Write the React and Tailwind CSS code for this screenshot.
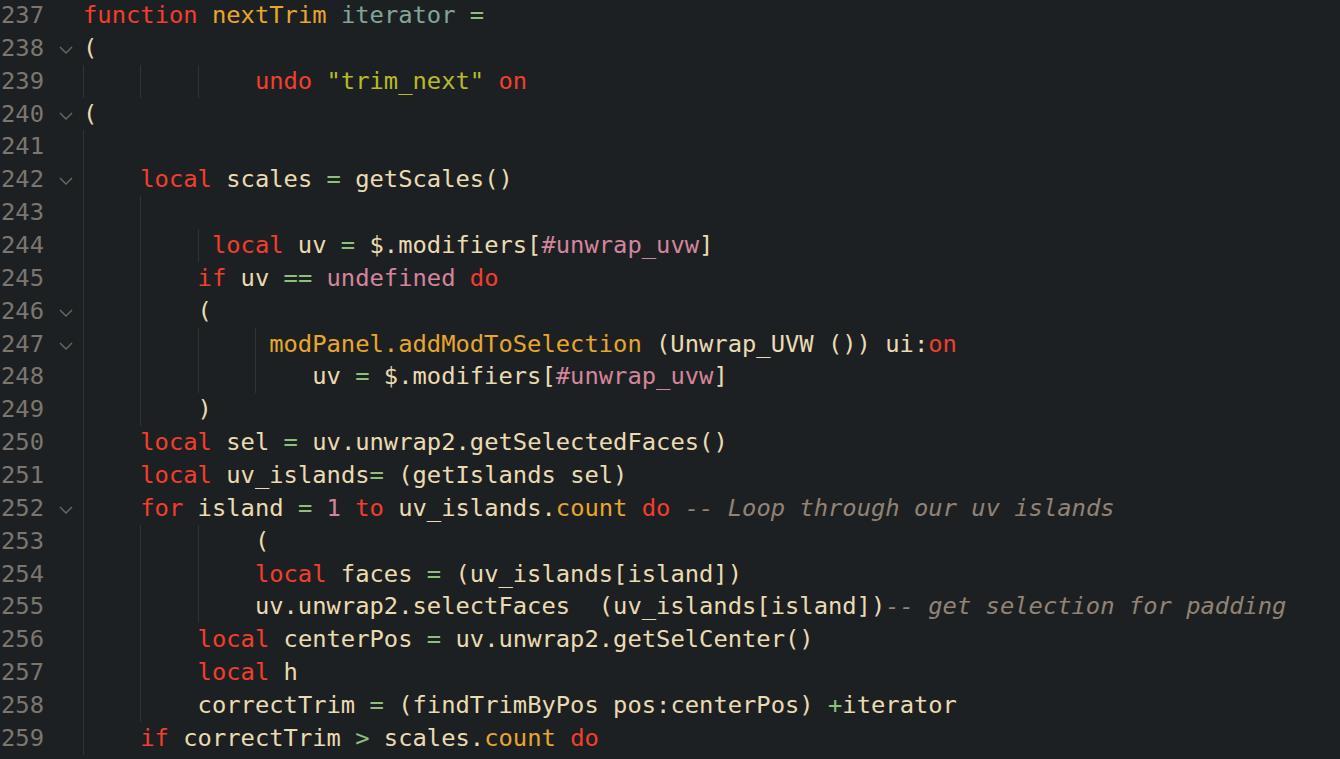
import React from 'react';

const colors = {
  k: 'text-[#f43e2d]',
  f: 'text-[#e8a72c]',
  t: 'text-[#ebdbb2]',
  o: 'text-[#8ec07c]',
  p: 'text-[#d3869b]',
  s: 'text-[#b8bb26]',
  b: 'text-[#83a598]',
  c: 'text-[#928374] italic',
};

// guides = columns where indent guides sit, col = column where the code starts
const lines = [
  { n: 237, guides: [], col: 0, code: [['k', 'function'], ['t', ' '], ['f', 'nextTrim'], ['t', ' '], ['b', 'iterator'], ['t', ' '], ['o', '=']] },
  { n: 238, fold: true, guides: [], col: 0, code: [['t', '(']] },
  { n: 239, guides: [0, 4, 8], col: 12, code: [['k', 'undo'], ['t', ' '], ['s', '"trim_next"'], ['t', ' '], ['k', 'on']] },
  { n: 240, fold: true, guides: [], col: 0, code: [['t', '(']] },
  { n: 241, guides: [0], col: 4, code: [] },
  { n: 242, fold: true, guides: [0], col: 4, code: [['k', 'local'], ['t', ' scales '], ['o', '='], ['t', ' getScales()']] },
  { n: 243, guides: [0, 4], col: 8, code: [] },
  { n: 244, guides: [0, 4, 8], col: 9, code: [['k', 'local'], ['t', ' uv '], ['o', '='], ['t', ' $.modifiers['], ['p', '#unwrap_uvw'], ['t', ']']] },
  { n: 245, guides: [0, 4], col: 8, code: [['k', 'if'], ['t', ' uv '], ['o', '=='], ['t', ' '], ['p', 'undefined'], ['t', ' '], ['k', 'do']] },
  { n: 246, fold: true, guides: [0, 4], col: 8, code: [['t', '(']] },
  { n: 247, fold: true, guides: [0, 4, 8, 12], col: 13, code: [['f', 'modPanel.addModToSelection'], ['t', ' (Unwrap_UVW ()) ui:'], ['k', 'on']] },
  { n: 248, guides: [0, 4, 8, 12], col: 16, code: [['t', 'uv '], ['o', '='], ['t', ' $.modifiers['], ['p', '#unwrap_uvw'], ['t', ']']] },
  { n: 249, guides: [0, 4], col: 8, code: [['t', ')']] },
  { n: 250, guides: [0], col: 4, code: [['k', 'local'], ['t', ' sel '], ['o', '='], ['t', ' uv.unwrap2.getSelectedFaces()']] },
  { n: 251, guides: [0], col: 4, code: [['k', 'local'], ['t', ' uv_islands'], ['o', '='], ['t', ' (getIslands sel)']] },
  { n: 252, fold: true, guides: [0], col: 4, code: [['k', 'for'], ['t', ' island '], ['o', '='], ['t', ' '], ['p', '1'], ['t', ' '], ['k', 'to'], ['t', ' uv_islands.'], ['f', 'count'], ['t', ' '], ['k', 'do'], ['t', ' '], ['c', '-- Loop through our uv islands']] },
  { n: 253, guides: [0, 4, 8], col: 12, code: [['t', '(']] },
  { n: 254, guides: [0, 4, 8], col: 12, code: [['k', 'local'], ['t', ' faces '], ['o', '='], ['t', ' (uv_islands[island])']] },
  { n: 255, guides: [0, 4, 8], col: 12, code: [['t', 'uv.unwrap2.selectFaces  (uv_islands[island])'], ['c', '-- get selection for padding']] },
  { n: 256, guides: [0, 4], col: 8, code: [['k', 'local'], ['t', ' centerPos '], ['o', '='], ['t', ' uv.unwrap2.getSelCenter()']] },
  { n: 257, guides: [0, 4], col: 8, code: [['k', 'local'], ['t', ' h']] },
  { n: 258, guides: [0, 4], col: 8, code: [['t', 'correctTrim '], ['o', '='], ['t', ' (findTrimByPos pos:centerPos) '], ['o', '+'], ['t', 'iterator']] },
  { n: 259, guides: [0], col: 4, code: [['k', 'if'], ['t', ' correctTrim '], ['o', '>'], ['t', ' scales.'], ['f', 'count'], ['t', ' '], ['k', 'do']] },
];

const Chevron = () => (
  <svg width="14" height="8" viewBox="0 0 14 8" className="mt-[3px]">
    <path d="M1 1 L7 7 L13 1" fill="none" stroke="#6d6862" strokeWidth="1.4" />
  </svg>
);

const App = () => {
  return (
    <div className="w-[1340px] h-[759px] overflow-hidden bg-[#1d2023] font-['DejaVu_Sans_Mono',monospace] text-[23.8px]">
      <div className="-mt-[1px] flex flex-col">
        {lines.map((line) => (
          <div key={line.n} className="flex h-[32.86px] leading-[32.86px]">
            <div className="w-[44px] shrink-0 text-right text-[#7c766f]">{line.n}</div>
            <div className="w-[39px] shrink-0 flex items-center justify-center pl-[5px]">
              {line.fold && <Chevron />}
            </div>
            {line.guides.map((g, i) => {
              const next = i + 1 < line.guides.length ? line.guides[i + 1] : line.col;
              return (
                <div
                  key={g}
                  className="shrink-0 border-l border-[#303437]"
                  style={{ width: `${next - g}ch` }}
                />
              );
            })}
            {line.guides.length === 0 && line.col > 0 && (
              <div className="shrink-0" style={{ width: `${line.col}ch` }} />
            )}
            <div className="whitespace-pre">
              {line.code.map(([c, text], i) => (
                <span key={i} className={colors[c]}>{text}</span>
              ))}
            </div>
          </div>
        ))}
      </div>
    </div>
  );
};

export default App;
